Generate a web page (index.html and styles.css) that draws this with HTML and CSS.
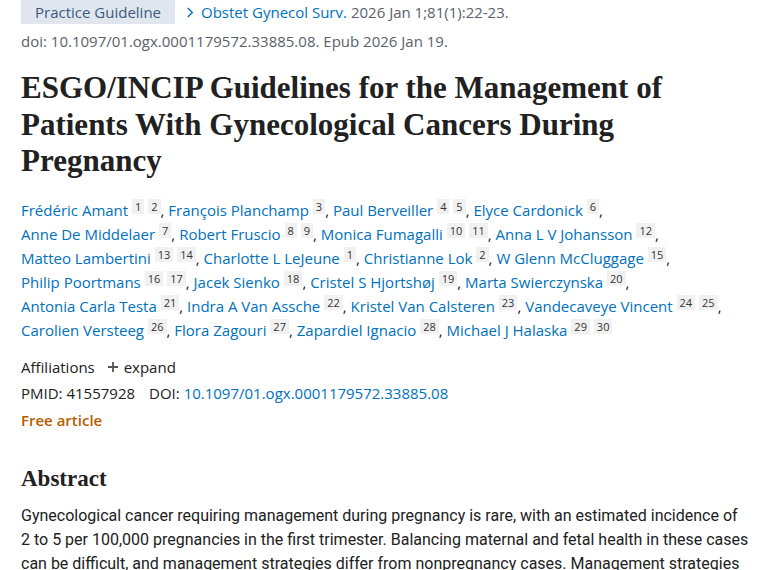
FILE: index.html
```html
<!DOCTYPE html>
<html lang="en">
<head>
<meta charset="utf-8">
<title>ESGO/INCIP Guidelines</title>
<link rel="stylesheet" href="styles.css">
</head>
<body>
<main class="article">
  <div class="cit-row">
    <span class="pub-type">Practice Guideline</span>
    <span class="journal"><svg class="chev" viewBox="0 0 10 14" width="9" height="13"><path d="M2 2 L7 7 L2 12" fill="none" stroke="#0071bc" stroke-width="1.6"/></svg><a href="#" class="link">Obstet Gynecol Surv.</a> <span class="cit">2026 Jan 1;81(1):22-23.</span></span>
  </div>
  <div class="doi-row">doi: 10.1097/01.ogx.0001179572.33885.08. Epub 2026 Jan 19.</div>

  <h1 class="title">ESGO/INCIP Guidelines for the Management of Patients With Gynecological Cancers During Pregnancy</h1>

  <div class="authors">
    <span class="au"><a href="#">Frédéric Amant</a> <sup>1</sup> <sup>2</sup>,</span> <span class="au"><a href="#">François Planchamp</a> <sup>3</sup>,</span> <span class="au"><a href="#">Paul Berveiller</a> <sup>4</sup> <sup>5</sup>,</span> <span class="au"><a href="#">Elyce Cardonick</a> <sup>6</sup>,</span>
    <span class="au"><a href="#">Anne De Middelaer</a> <sup>7</sup>,</span> <span class="au"><a href="#">Robert Fruscio</a> <sup>8</sup> <sup>9</sup>,</span> <span class="au"><a href="#">Monica Fumagalli</a> <sup>10</sup> <sup>11</sup>,</span> <span class="au"><a href="#">Anna L V Johansson</a> <sup>12</sup>,</span>
    <span class="au"><a href="#">Matteo Lambertini</a> <sup>13</sup> <sup>14</sup>,</span> <span class="au"><a href="#">Charlotte L LeJeune</a> <sup>1</sup>,</span> <span class="au"><a href="#">Christianne Lok</a> <sup>2</sup>,</span> <span class="au"><a href="#">W Glenn McCluggage</a> <sup>15</sup>,</span>
    <span class="au"><a href="#">Philip Poortmans</a> <sup>16</sup> <sup>17</sup>,</span> <span class="au"><a href="#">Jacek Sienko</a> <sup>18</sup>,</span> <span class="au"><a href="#">Cristel S Hjortshøj</a> <sup>19</sup>,</span> <span class="au"><a href="#">Marta Swierczynska</a> <sup>20</sup>,</span>
    <span class="au"><a href="#">Antonia Carla Testa</a> <sup>21</sup>,</span> <span class="au"><a href="#">Indra A Van Assche</a> <sup>22</sup>,</span> <span class="au"><a href="#">Kristel Van Calsteren</a> <sup>23</sup>,</span> <span class="au"><a href="#">Vandecaveye Vincent</a> <sup>24</sup> <sup>25</sup>,</span>
    <span class="au"><a href="#">Carolien Versteeg</a> <sup>26</sup>,</span> <span class="au"><a href="#">Flora Zagouri</a> <sup>27</sup>,</span> <span class="au"><a href="#">Zapardiel Ignacio</a> <sup>28</sup>,</span> <span class="au"><a href="#">Michael J Halaska</a> <sup>29</sup> <sup>30</sup></span>
  </div>

  <div class="affil">Affiliations <span class="expand"><svg class="plus" viewBox="0 0 12 12" width="12" height="12"><path d="M6 1 V11 M1 6 H11" stroke="#555" stroke-width="1.8"/></svg>expand</span></div>
  <div class="ids"><span class="pmid">PMID: 41557928</span><span>DOI: <a href="#" class="link">10.1097/01.ogx.0001179572.33885.08</a></span></div>
  <div class="free">Free article</div>

  <h2 class="abs-title">Abstract</h2>
  <p class="abstract">Gynecological cancer requiring management during pregnancy is rare, with an estimated incidence of<br>2 to 5 per 100,000 pregnancies in the first trimester. Balancing maternal and fetal health in these cases can be difficult, and management strategies differ from nonpregnancy cases. Management strategies</p>
</main>
</body>
</html>
```

FILE: styles.css
```css
html, body {
  margin: 0;
  padding: 0;
  background: #fff;
}
body {
  font-family: "Open Sans", "Noto Sans", sans-serif;
  color: #212121;
  font-size: 15px;
}
.article {
  padding: 0 21px;
}
a {
  color: #0071bc;
  text-decoration: none;
}
.cit-row {
  display: flex;
  align-items: center;
  height: 24px;
}
.pub-type {
  background: #dfe6ee;
  color: #3d5a7e;
  height: 24px;
  line-height: 24px;
  padding: 0 14px;
  font-size: 15px;
}
.journal {
  margin-left: 11px;
  color: #0071bc;
  display: flex;
  align-items: center;
  gap: 4px;
  white-space: pre;
}
.chev {
  margin-right: 2px;
}
.cit {
  color: #5b616b;
}
.doi-row {
  color: #5b616b;
  margin-top: 5px;
  line-height: 24px;
}
.title {
  font-family: "Liberation Serif", serif;
  font-weight: bold;
  font-size: 31px;
  line-height: 36.5px;
  margin: 17px 0 0;
  color: #212121;
  max-width: 680px;
}
.authors {
  margin-top: 18px;
  line-height: 24px;
  width: 718px;
  font-size: 15px;
}
.au {
  white-space: nowrap;
}
.authors sup {
  font-size: 11px;
  background: #f1f1f1;
  color: #333;
  padding: 0 3px;
  vertical-align: 5px;
  line-height: 1;
}
.affil {
  margin-top: 12px;
  line-height: 26px;
}
.expand {
  margin-left: 8px;
  display: inline-flex;
  align-items: center;
  gap: 5px;
}
.ids {
  line-height: 26px;
}
.pmid {
  margin-right: 14px;
}
.free {
  color: #b85c00;
  font-weight: 600;
  line-height: 28px;
}
.abs-title {
  font-family: "Liberation Serif", serif;
  font-weight: bold;
  font-size: 23px;
  margin: 30px 0 0;
  line-height: 30px;
}
.abstract {
  margin: 10px 0 0;
  font-family: Roboto, "Noto Sans", sans-serif;
  font-size: 16px;
  line-height: 24px;
  width: 731px;
}
```
